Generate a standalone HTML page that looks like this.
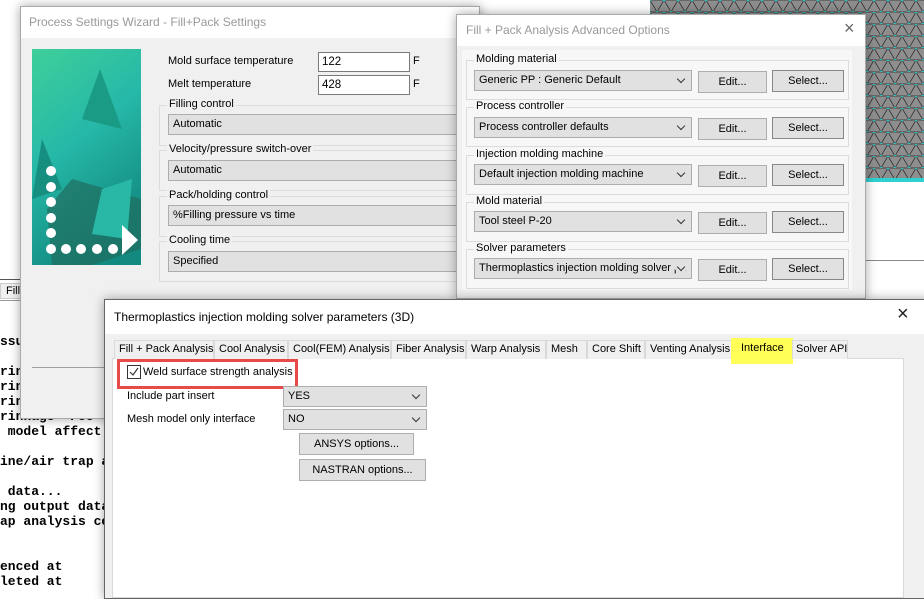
<!DOCTYPE html>
<html><head><meta charset="utf-8"><style>
*{margin:0;padding:0;box-sizing:border-box}
body{width:924px;height:584px;overflow:hidden;position:relative;background:#fff;font-family:"Liberation Sans",sans-serif;font-size:11px;color:#000}
.a{position:absolute}
.con{font-family:"Liberation Mono",monospace;font-weight:bold;font-size:13px;line-height:15px;white-space:pre}
.dlg{position:absolute;background:#f0f0f0;border:1px solid #aaa;box-shadow:0 0 10px rgba(0,0,0,.35)}
.tb{position:absolute;left:0;right:0;top:0;background:#fff}
.lbl{position:absolute;white-space:nowrap}
.inp{position:absolute;background:#fff;border:1px solid #7a7a7a;padding:0 0 0 3px;height:20px;line-height:18px;font-size:11.5px}
.cmb{position:absolute;background:#e1e1e1;border:1px solid #adadad;padding:0 0 0 4px;height:21px;line-height:19px;white-space:nowrap;overflow:hidden}
.grp{position:absolute;border:1px solid #dcdcdc}
.grp span{position:absolute;top:-8px;left:7px;background:#f0f0f0;padding:0 2px;white-space:nowrap}
.btn{position:absolute;background:#e1e1e1;border:1px solid #adadad;text-align:center;height:22px;line-height:20px}
.arr{position:absolute;right:7px;top:5px;width:6px;height:6px;border-right:1px solid #333;border-bottom:1px solid #333;transform:rotate(45deg)}
.cmb.d{padding-right:20px}
.tab{position:absolute;top:340px;height:19px;background:#f0f0f0;border:1px solid #d9d9d9;border-bottom:none;line-height:17px;padding-left:4px;white-space:nowrap;overflow:hidden}
.dot{position:absolute;width:10px;height:10px;border-radius:50%;background:#fff}
</style></head><body>
<!-- mesh background -->
<svg class="a" style="left:650px;top:0" width="274" height="190">
<defs><pattern id="m" width="14" height="12" patternUnits="userSpaceOnUse">
<rect width="14" height="12" fill="#8e8e8e"/>
<path d="M0 0L14 0M0 0L7 12L14 0M0 12L14 12" stroke="#222" stroke-width=".7" fill="none"/>
<circle cx="0" cy="0" r="1.3" fill="#20c8c8"/><circle cx="14" cy="0" r="1.3" fill="#20c8c8"/><circle cx="7" cy="12" r="1.3" fill="#20c8c8"/>
</pattern></defs>
<rect width="274" height="180" fill="url(#m)"/>
<rect y="178" width="274" height="4" fill="#2fd0d0"/>
</svg>
<div class="a" style="left:866px;top:260px;width:58px;height:1px;background:#888"></div>
<div class="a" style="left:0;top:279px;width:20px;height:1px;background:#555"></div>
<div class="a" style="left:0;top:283px;width:22px;height:16px;background:#f0f0f0;border:1px solid #ccc;padding:1px 0 0 5px;font-size:11px">Fill</div>
<div class="a" style="left:0;top:300px;width:30px;height:1px;background:#999"></div>
<!-- console -->
<div class="a con" style="left:0;top:334px">ssu

rin
rin
rin
rinkage  Poo
 model affect

ine/air trap a

 data...
ng output data
ap analysis co


enced at
leted at</div>

<!-- wizard -->
<div class="dlg" style="left:20px;top:6px;width:460px;height:413px">
<div class="tb" style="height:31px"><div class="lbl" style="left:8px;top:8px;color:#999;font-size:12px">Process Settings Wizard - Fill+Pack Settings</div></div>
<svg class="a" style="left:11px;top:42px" width="109" height="216">
<defs><linearGradient id="g" x1="0" y1="0" x2="0.4" y2="1"><stop offset="0" stop-color="#3fcf9a"/><stop offset=".5" stop-color="#26b8a8"/><stop offset="1" stop-color="#128a80"/></linearGradient></defs>
<rect width="109" height="216" fill="url(#g)"/>
<path d="M68 20L50 70L90 80Z" fill="#1a9b86"/><path d="M10 90L30 140L0 150Z" fill="#168f80"/>
<path d="M40 130L109 150L109 200L60 216L20 216L15 160Z" fill="#1f6e5f" opacity=".7"/>
<path d="M70 140L100 130L95 190L60 185Z" fill="#2ab8a6"/>
<path d="M90 176L106 191L90 206Z" fill="#fff"/>
</svg>
<div class="dot" style="left:25px;top:159px"></div><div class="dot" style="left:25px;top:175px"></div><div class="dot" style="left:25px;top:190px"></div><div class="dot" style="left:25px;top:206px"></div><div class="dot" style="left:25px;top:221px"></div><div class="dot" style="left:25px;top:237px"></div>
<div class="dot" style="left:40px;top:237px"></div><div class="dot" style="left:55px;top:237px"></div><div class="dot" style="left:71px;top:237px"></div><div class="dot" style="left:87px;top:237px"></div>
<div class="lbl" style="left:147px;top:48px">Mold surface temperature</div>
<div class="inp" style="left:297px;top:45px;width:92px">122</div><div class="lbl" style="left:392px;top:48px">F</div>
<div class="lbl" style="left:147px;top:71px">Melt temperature</div>
<div class="inp" style="left:297px;top:68px;width:92px">428</div><div class="lbl" style="left:392px;top:71px">F</div>
<div class="grp" style="left:138px;top:98px;width:330px;height:41px"><span>Filling control</span></div>
<div class="cmb" style="left:147px;top:107px;width:320px">Automatic</div>
<div class="grp" style="left:138px;top:143px;width:330px;height:41px"><span>Velocity/pressure switch-over</span></div>
<div class="cmb" style="left:147px;top:153px;width:320px">Automatic</div>
<div class="grp" style="left:138px;top:189px;width:330px;height:41px"><span>Pack/holding control</span></div>
<div class="cmb" style="left:147px;top:198px;width:320px">%Filling pressure vs time</div>
<div class="grp" style="left:138px;top:234px;width:330px;height:41px"><span>Cooling time</span></div>
<div class="cmb" style="left:147px;top:244px;width:320px">Specified</div>
<div class="a" style="left:11px;top:360px;width:440px;height:1px;background:#a0a0a0"></div>
</div>

<!-- advanced -->
<div class="dlg" style="left:456px;top:14px;width:410px;height:285px">
<div class="tb" style="height:31px"><div class="lbl" style="left:9px;top:8px;color:#999;font-size:12px">Fill + Pack Analysis Advanced Options</div>
<div class="lbl" style="left:387px;top:3px;font-size:18px;color:#666">×</div></div>
<div class="a" style="left:5px;top:35px;width:390px;height:240px;background:#f7f7f7"></div>
<div class="grp" style="left:9px;top:45px;width:383px;height:40px"><span style="background:#f7f7f7">Molding material</span></div>
<div class="cmb d" style="left:17px;top:55px;width:218px">Generic PP : Generic Default<i class="arr"></i></div>
<div class="btn" style="left:241px;top:56px;width:69px">Edit...</div><div class="btn" style="left:315px;top:55px;width:72px;border-color:#888">Select...</div>
<div class="grp" style="left:9px;top:92px;width:383px;height:40px"><span style="background:#f7f7f7">Process controller</span></div>
<div class="cmb d" style="left:17px;top:102px;width:218px">Process controller defaults<i class="arr"></i></div>
<div class="btn" style="left:241px;top:103px;width:69px">Edit...</div><div class="btn" style="left:315px;top:102px;width:72px;border-color:#888">Select...</div>
<div class="grp" style="left:9px;top:140px;width:383px;height:40px"><span style="background:#f7f7f7">Injection molding machine</span></div>
<div class="cmb d" style="left:17px;top:149px;width:218px">Default injection molding machine<i class="arr"></i></div>
<div class="btn" style="left:241px;top:150px;width:69px">Edit...</div><div class="btn" style="left:315px;top:149px;width:72px;border-color:#888">Select...</div>
<div class="grp" style="left:9px;top:187px;width:383px;height:40px"><span style="background:#f7f7f7">Mold material</span></div>
<div class="cmb d" style="left:17px;top:196px;width:218px">Tool steel P-20<i class="arr"></i></div>
<div class="btn" style="left:241px;top:197px;width:69px">Edit...</div><div class="btn" style="left:315px;top:196px;width:72px;border-color:#888">Select...</div>
<div class="grp" style="left:9px;top:234px;width:383px;height:40px"><span style="background:#f7f7f7">Solver parameters</span></div>
<div class="cmb d" style="left:17px;top:243px;width:218px">Thermoplastics injection molding solver pa<i class="arr" style="background:#e1e1e1;box-shadow:0 0 0 3px #e1e1e1"></i></div>
<div class="btn" style="left:241px;top:244px;width:69px">Edit...</div><div class="btn" style="left:315px;top:243px;width:72px;border-color:#888">Select...</div>
</div>

<!-- solver -->
<div class="dlg" style="left:104px;top:299px;width:830px;height:300px;border-color:#666">
<div class="tb" style="height:34px"><div class="lbl" style="left:9px;top:10px;font-size:12px">Thermoplastics injection molding solver parameters (3D)</div>
<div class="lbl" style="left:792px;top:3px;font-size:20px;color:#222">×</div></div>
<div class="a" style="left:7px;top:58px;width:792px;height:240px;background:#fff;border:1px solid #d9d9d9"></div>
</div>
<div class="tab" style="left:114px;width:100px">Fill + Pack Analysis</div>
<div class="tab" style="left:214px;width:74px">Cool Analysis</div>
<div class="tab" style="left:288px;width:103px">Cool(FEM) Analysis</div>
<div class="tab" style="left:391px;width:75px">Fiber Analysis</div>
<div class="tab" style="left:466px;width:80px">Warp Analysis</div>
<div class="tab" style="left:546px;width:41px">Mesh</div>
<div class="tab" style="left:587px;width:58px">Core Shift</div>
<div class="tab" style="left:645px;width:88px">Venting Analysis</div>
<div class="a" style="left:731px;top:338px;width:62px;height:26px;background:#ffff57"></div>
<div class="a lbl" style="left:741px;top:342px">Interface</div>
<div class="tab" style="left:792px;width:56px;padding-left:3px">Solver API</div>
<div class="a" style="left:117px;top:359px;width:181px;height:30px;border:3px solid #e84a4a"></div>
<div class="a" style="left:127px;top:365px;width:14px;height:14px;border:1px solid #333;background:#fff"></div>
<svg class="a" style="left:128px;top:366px" width="12" height="12"><path d="M2 6L5 9L10 2" stroke="#333" stroke-width="1.2" fill="none"/></svg>
<div class="lbl" style="left:143px;top:366px">Weld surface strength analysis</div>
<div class="lbl" style="left:127px;top:390px">Include part insert</div>
<div class="cmb d" style="left:283px;top:386px;width:144px">YES<i class="arr"></i></div>
<div class="lbl" style="left:127px;top:413px">Mesh model only interface</div>
<div class="cmb d" style="left:283px;top:409px;width:144px">NO<i class="arr"></i></div>
<div class="btn" style="left:299px;top:433px;width:115px">ANSYS options...</div>
<div class="btn" style="left:299px;top:459px;width:127px">NASTRAN options...</div>
</body></html>
